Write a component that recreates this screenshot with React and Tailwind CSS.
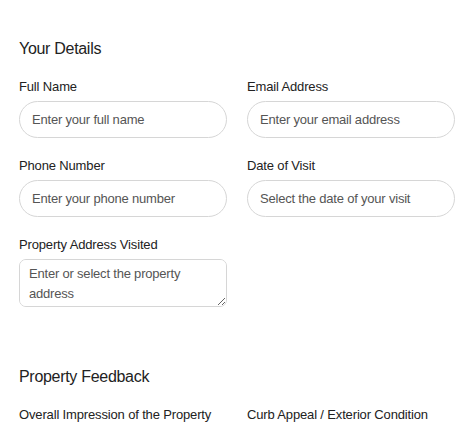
import React from "react";

const font = { fontFamily: '"Liberation Sans", Arial, Helvetica, sans-serif' };

function Field({ label, placeholder }) {
  return (
    <div className="flex flex-col">
      <label className="text-[13px] leading-[16px] tracking-[-0.15px] text-[#222] mb-[6px]">{label}</label>
      <input
        type="text"
        placeholder={placeholder}
        className="h-[37px] w-full rounded-full border border-[#d6d6d6] bg-white px-[12px] text-[13px] tracking-[-0.2px] text-[#222] outline-none placeholder:text-[#555]"
      />
    </div>
  );
}

export default function App() {
  return (
    <div className="min-h-[426px] w-full bg-white px-[19px]" style={font}>
      <section className="pt-[37px]">
        <h2 className="text-[16px] leading-[24px] tracking-[-0.3px] text-[#222] mb-[18px]">Your Details</h2>
        <div className="grid grid-cols-2 gap-x-[20px] gap-y-[20px]">
          <Field label="Full Name" placeholder="Enter your full name" />
          <Field label="Email Address" placeholder="Enter your email address" />
          <Field label="Phone Number" placeholder="Enter your phone number" />
          <Field label="Date of Visit" placeholder="Select the date of your visit" />
          <div className="flex flex-col">
            <label className="text-[13px] leading-[16px] tracking-[-0.15px] text-[#222] mb-[6px]">Property Address Visited</label>
            <textarea
              rows={2}
              placeholder="Enter or select the property address"
              className="block h-[48px] w-full rounded-[7px] border border-[#d6d6d6] bg-white px-[9px] py-[4px] text-[13px] leading-[19.5px] tracking-[-0.2px] text-[#222] outline-none placeholder:text-[#555]"
            />
          </div>
        </div>
      </section>
      <section className="pt-[58px]">
        <h2 className="text-[16px] leading-[24px] tracking-[-0.3px] text-[#222] mb-[18px]">Property Feedback</h2>
        <div className="grid grid-cols-2 gap-x-[20px]">
          <label className="text-[13px] leading-[16px] tracking-[-0.15px] text-[#222]">Overall Impression of the Property</label>
          <label className="text-[13px] leading-[16px] tracking-[-0.15px] text-[#222]">Curb Appeal / Exterior Condition</label>
        </div>
      </section>
    </div>
  );
}
